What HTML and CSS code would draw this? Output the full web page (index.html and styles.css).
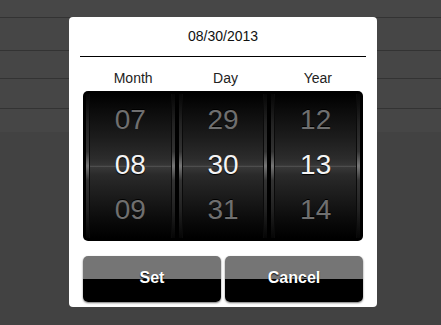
FILE: index.html
```html
<!DOCTYPE html>
<html>
<head>
<meta charset="utf-8">
<link rel="stylesheet" href="styles.css">
</head>
<body>
<div class="page">
  <div class="bar"></div>
  <div class="row row-a"></div>
  <div class="row row-b"></div>
  <div class="row row-c"></div>
  <div class="row row-d"></div>
</div>
<div class="dialog">
  <div class="title">08/30/2013</div>
  <div class="rule"></div>
  <div class="labels">
    <span>Month</span>
    <span>Day</span>
    <span>Year</span>
  </div>
  <div class="wheels">
    <div class="wheel">
      <div class="num">07</div>
      <div class="num sel">08</div>
      <div class="num">09</div>
    </div>
    <div class="wheel">
      <div class="num">29</div>
      <div class="num sel">30</div>
      <div class="num">31</div>
    </div>
    <div class="wheel">
      <div class="num">12</div>
      <div class="num sel">13</div>
      <div class="num">14</div>
    </div>
  </div>
  <div class="buttons">
    <button class="btn">Set</button>
    <button class="btn">Cancel</button>
  </div>
</div>
</body>
</html>
```

FILE: styles.css
```css
html, body {
  margin: 0;
  padding: 0;
}
body {
  width: 441px;
  height: 325px;
  overflow: hidden;
  background: #424242;
  font-family: "Liberation Sans", Arial, sans-serif;
  position: relative;
}
.page {
  display: flex;
  flex-direction: column;
}
.bar {
  height: 17px;
  background: #474747;
  border-bottom: 1px solid #333;
}
.row {
  background: #464646;
  border-bottom: 1px solid #333;
}
.row-a { height: 32px; }
.row-b { height: 27px; }
.row-c { height: 29px; }
.row-d { height: 23px; border-bottom: none; }

.dialog {
  position: absolute;
  left: 69px;
  top: 17px;
  width: 308px;
  height: 290px;
  box-sizing: border-box;
  padding: 0 14px 5px 14px;
  background: #fff;
  border-radius: 4px;
  display: flex;
  flex-direction: column;
}
.title {
  height: 39px;
  line-height: 39px;
  text-align: center;
  font-size: 14px;
  color: #111;
}
.rule {
  margin: 0 -3px;
  height: 0;
  border-top: 1px solid #000;
}
.labels {
  height: 34px;
  box-sizing: border-box;
  padding: 13px 0 0 4px;
  margin-right: -1px;
  display: grid;
  grid-template-columns: 1fr 1fr 1fr;
  line-height: 16px;
  font-size: 14px;
  color: #222;
  text-align: center;
}
.wheels {
  height: 150px;
  box-sizing: border-box;
  padding: 3px;
  background: #000;
  border-radius: 5px;
  display: grid;
  grid-template-columns: 1fr 1fr 1fr;
  gap: 4px;
}
.wheel {
  display: flex;
  flex-direction: column;
  justify-content: center;
  padding-bottom: 3px;
  background:
    linear-gradient(to bottom, #050505 0%, #222 20%, #333 40%, #777 50%, #333 60%, #222 80%, #050505 100%) left top / 3px 100% no-repeat,
    linear-gradient(to bottom, #050505 0%, #222 20%, #333 40%, #777 50%, #333 60%, #222 80%, #050505 100%) right top / 3px 100% no-repeat,
    linear-gradient(to right, transparent 3px, #0a0a0a 3px, #0a0a0a 4px, transparent 4px, transparent calc(100% - 4px), #0a0a0a calc(100% - 4px), #0a0a0a calc(100% - 3px), transparent calc(100% - 3px)),
    linear-gradient(to bottom, #000 0%, #0c0c0c 12%, #1c1c1c 30%, #2c2c2c 45%, #363636 49.6%, #5e5e5e 50%, #383838 50.8%, #2a2a2a 56%, #1a1a1a 72%, #0a0a0a 88%, #000 100%);
}
.num {
  height: 45px;
  line-height: 45px;
  text-align: center;
  font-size: 28px;
  color: #6f6f6f;
  text-shadow: 0 -1px 0 #000;
}
.num.sel {
  color: #f4f4f4;
  text-shadow: 0 1px 1px #000;
}
.buttons {
  margin-top: 15px;
  height: 46px;
  display: grid;
  grid-template-columns: 1fr 1fr;
  gap: 4px;
}
.btn {
  margin: 0;
  padding: 0 0 2px 0;
  border: none;
  border-radius: 5px;
  background: linear-gradient(to bottom, #757575 50%, #000 50%);
  box-shadow: 0 1px 2px rgba(0, 0, 0, 0.55);
  color: #fff;
  font-family: "Liberation Sans", Arial, sans-serif;
  font-weight: bold;
  font-size: 16px;
  line-height: 44px;
  text-shadow: 0 1px 1px #000;
}
```
